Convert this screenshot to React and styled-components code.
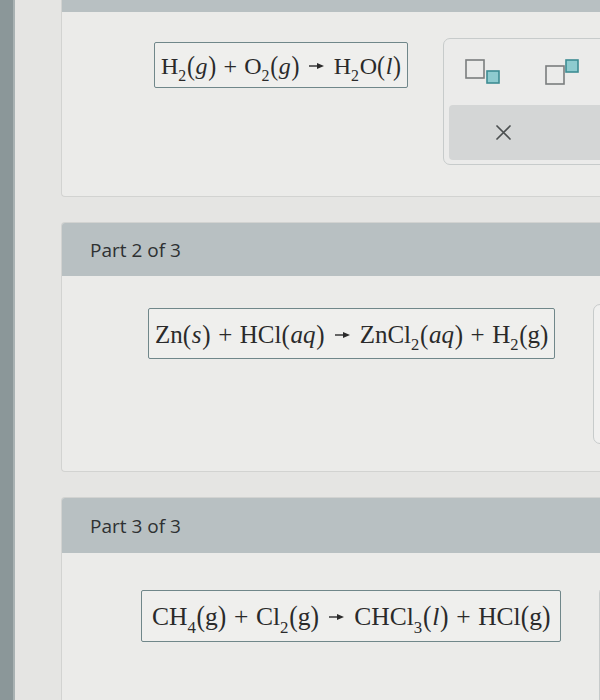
import React from 'react';
import styled, { createGlobalStyle } from 'styled-components';

const GlobalStyle = createGlobalStyle`
  html, body {
    margin: 0;
    padding: 0;
    background: #e5e5e3;
    overflow: hidden;
  }
`;

const Page = styled.div`
  display: flex;
  width: 600px;
  height: 700px;
  overflow: hidden;
  background: #e5e5e3;
`;

const Strip = styled.div`
  width: 13px;
  flex-shrink: 0;
  background: #8b9799;
  border-right: 2px solid #a9b2b3;
`;

const Content = styled.div`
  flex: 1;
  display: flex;
  flex-direction: column;
  gap: 25px;
  padding-left: 46px;
  margin-top: -42px;
  margin-right: -60px;
`;

const Card = styled.section`
  flex-shrink: 0;
  background: #ebebe9;
  border: 1px solid #d2d3d1;
  border-right: none;
  border-radius: 4px 0 0 4px;
  overflow: hidden;
`;

const Header = styled.div`
  height: ${(p) => p.$height || 53}px;
  background: #b8c0c2;
  display: flex;
  align-items: center;
  padding-left: 28px;
  font-family: 'Open Sans', 'Noto Sans', sans-serif;
  font-size: 19px;
  color: #2e3132;
`;

const Body = styled.div`
  display: flex;
  align-items: flex-start;
  gap: ${(p) => p.$gap || 36}px;
  padding: ${(p) => p.$top || 30}px 0 0 ${(p) => p.$left || 90}px;
  height: ${(p) => p.$height}px;
  box-sizing: border-box;
`;

const EqBox = styled.div`
  flex-shrink: 0;
  border: 1.5px solid #70878a;
  border-radius: 2px;
  background: #efefed;
  padding: ${(p) => p.$pad || '6px 7px 8px'};
  font-family: 'Liberation Serif', 'Times New Roman', serif;
  font-size: ${(p) => p.$size || 25}px;
  line-height: 1.25;
  color: #2a2a2a;
  white-space: nowrap;
`;

const Sub = styled.sub`
  font-size: 0.66em;
  vertical-align: -0.45em;
  line-height: 0;
  margin-right: 0.04em;
`;

const It = styled.i`
  font-style: italic;
  margin: 0 0.03em;
`;

const Paren = styled.span`
  display: inline-block;
  transform: scaleY(1.12);
`;

const ArrowWrap = styled.span`
  display: inline-block;
  margin: 0 0.4em;
  vertical-align: 0.16em;
`;

const Op = styled.span`
  margin: 0 0.3em;
`;

const Tools = styled.div`
  flex-shrink: 0;
  width: 200px;
  height: ${(p) => p.$height || 127}px;
  margin-top: -4px;
  background: ${(p) => p.$bg || '#ebebea'};
  border: 1.5px solid #c7cbcb;
  border-radius: 7px;
  box-sizing: border-box;
  display: flex;
  flex-direction: column;
  padding: 4px 0 4px 5px;
`;

const IconRow = styled.div`
  display: flex;
  gap: 42px;
  padding: 16px 0 0 16px;
  height: 62px;
  box-sizing: border-box;
`;

const ButtonRow = styled.div`
  flex: 1;
  display: flex;
  background: #d4d6d6;
  border-radius: 4px 0 0 4px;
`;

const ClearBtn = styled.button`
  width: 108px;
  border: none;
  background: transparent;
  display: flex;
  align-items: center;
  justify-content: center;
  padding: 0;
`;

const Arrow = () => (
  <ArrowWrap>
    <svg width="15" height="8" viewBox="0 0 15 8">
      <path d="M0 4 H9" stroke="#2a2a2a" strokeWidth="1.4" />
      <path d="M8 1 L15 4 L8 7 Z" fill="#2a2a2a" />
    </svg>
  </ArrowWrap>
);

const P = ({ children }) => (
  <>
    <Paren>(</Paren>
    {children}
    <Paren>)</Paren>
  </>
);

const SubIcon = () => (
  <svg width="38" height="26" viewBox="0 0 38 26">
    <rect x="1" y="1" width="18" height="18" fill="none" stroke="#7a7d7e" strokeWidth="1.6" />
    <rect x="22" y="12" width="12" height="12" fill="#8ecbcf" stroke="#3e8c93" strokeWidth="1.6" />
  </svg>
);

const SupIcon = () => (
  <svg width="38" height="26" viewBox="0 0 38 26">
    <rect x="1" y="7" width="18" height="18" fill="none" stroke="#7a7d7e" strokeWidth="1.6" />
    <rect x="21" y="1" width="12" height="12" fill="#8ecbcf" stroke="#3e8c93" strokeWidth="1.6" />
  </svg>
);

const CloseIcon = () => (
  <svg width="17" height="17" viewBox="0 0 17 17">
    <path d="M2 2 L15 15 M15 2 L2 15" stroke="#4b4f50" strokeWidth="1.7" strokeLinecap="round" />
  </svg>
);

const ToolPanel = ({ height, bg, empty }) => (
  <Tools $height={height} $bg={bg}>
    {!empty && (
      <>
        <IconRow>
          <SubIcon />
          <SupIcon />
        </IconRow>
        <ButtonRow>
          <ClearBtn>
            <CloseIcon />
          </ClearBtn>
        </ButtonRow>
      </>
    )}
  </Tools>
);

const App = () => {
  return (
    <Page>
      <GlobalStyle />
      <Strip />
      <Content>
        <Card>
          <Header />
          <Body $height={184} $left={92} $top={30} $gap={35}>
            <EqBox $size={24} $pad="4px 6px 6px">
              H<Sub>2</Sub><P><It>g</It></P><Op>+</Op>O<Sub>2</Sub><P><It>g</It></P><Arrow />H<Sub>2</Sub>O<P><It>l</It></P>
            </EqBox>
            <ToolPanel />
          </Body>
        </Card>

        <Card>
          <Header>Part 2 of 3</Header>
          <Body $height={195} $left={86} $top={32} $gap={38}>
            <EqBox $size={25} $pad="6px 6px 8px">
              Zn<P><It>s</It></P><Op>+</Op>HCl<P><It>aq</It></P><Arrow />ZnCl<Sub>2</Sub><P><It>aq</It></P><Op>+</Op>H<Sub>2</Sub><P>g</P>
            </EqBox>
            <ToolPanel height={140} bg="#f0f0ef" empty />
          </Body>
        </Card>

        <Card>
          <Header $height={55}>Part 3 of 3</Header>
          <Body $height={200} $left={79} $top={37} $gap={38}>
            <EqBox $size={25.5} $pad="6px 10px 8px">
              CH<Sub>4</Sub><P>g</P><Op>+</Op>Cl<Sub>2</Sub><P>g</P><Arrow />CHCl<Sub>3</Sub><P><It>l</It></P><Op>+</Op>HCl<P>g</P>
            </EqBox>
            <ToolPanel height={140} bg="#f0f0ef" empty />
          </Body>
        </Card>
      </Content>
    </Page>
  );
};

export default App;
